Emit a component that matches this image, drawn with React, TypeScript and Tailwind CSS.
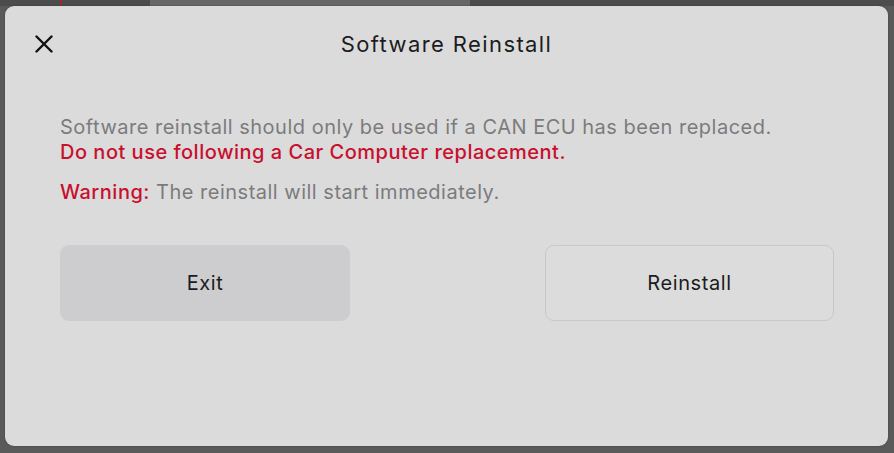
import React from "react";

export default function App() {
  return (
    <div
      className="relative w-[894px] h-[453px] overflow-hidden bg-[#5a5a5a] pt-[6px] pl-[5px] pr-[6px] pb-[7px]"
      style={{ fontFamily: "Inter, 'Open Sans', 'Liberation Sans', sans-serif" }}
    >
      <div className="absolute left-0 top-0 h-[6px] w-full bg-[#4c4c4c]">
        <div className="absolute left-[150px] top-0 h-[6px] w-[320px] bg-[#676767]" />
        <div className="absolute left-[60px] top-0 h-[5px] w-[2px] bg-[#b0202a]" />
      </div>
      <div className="relative flex h-full w-full flex-col rounded-[9px] bg-[#dbdbdc] shadow-[0_0_2px_rgba(0,0,0,0.3)]">
        <div className="relative flex h-[77px] items-center justify-center">
          <button className="absolute left-[30px] top-[29px] flex h-[18px] w-[18px] items-center justify-center">
            <svg width="18" height="18" viewBox="0 0 18 18" fill="none">
              <path d="M1.5 1.5 L16.5 16.5 M16.5 1.5 L1.5 16.5" stroke="#111" strokeWidth="2.4" strokeLinecap="round" />
            </svg>
          </button>
          <div className="text-[22px] font-normal tracking-[1.4px] text-[#1c1c1e]">Software Reinstall</div>
        </div>
        <div className="flex flex-col px-[55px] pt-[32px] text-[20px] leading-[25px] tracking-[0.5px]">
          <div className="text-[#7b7b7d]">Software reinstall should only be used if a CAN ECU has been replaced.</div>
          <div className="font-medium text-[#c8102e]">Do not use following a Car Computer replacement.</div>
          <div className="mt-[15px] text-[#7b7b7d]">
            <span className="font-medium text-[#c8102e]">Warning:</span> The reinstall will start immediately.
          </div>
        </div>
        <div className="flex justify-between pl-[55px] pr-[54px] pt-[40px]">
          <button className="flex h-[76px] w-[290px] items-center justify-center rounded-[9px] bg-[#cdcdcf] text-[20px] tracking-[0.6px] text-[#1c1c1e]">
            Exit
          </button>
          <button className="flex h-[76px] w-[289px] items-center justify-center rounded-[9px] border border-[#c8c8ca] bg-[#dcdcdd] text-[20px] tracking-[0.6px] text-[#1c1c1e]">
            Reinstall
          </button>
        </div>
      </div>
    </div>
  );
}
